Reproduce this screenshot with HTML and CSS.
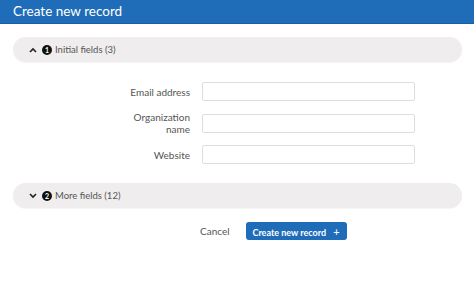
FILE: index.html
```html
<!DOCTYPE html>
<html lang="en">
<head>
  <meta charset="UTF-8">
  <title>Create new record</title>
  <link rel="stylesheet" href="styles.css">
</head>
<body>

  <div class="modal-header">Create new record</div>

  <div class="modal-body">
    <div class="section-bar">
      <svg class="chevron" width="8" height="6" viewBox="0 0 8 6"><path d="M1 5 L4 2 L7 5" fill="none" stroke="#222" stroke-width="1.6"/></svg>
      <span class="step">1</span>
      <span class="section-title">Initial fields (3)</span>
    </div>

    <div class="fields">
      <label class="field-label" for="email">Email address</label>
      <input class="field-input" id="email" type="text">

      <label class="field-label" for="org">Organization<br>name</label>
      <input class="field-input" id="org" type="text">

      <label class="field-label" for="web">Website</label>
      <input class="field-input" id="web" type="text">
    </div>

    <div class="section-bar section-bar--more">
      <svg class="chevron" width="8" height="6" viewBox="0 0 8 6"><path d="M1 1 L4 4 L7 1" fill="none" stroke="#222" stroke-width="1.6"/></svg>
      <span class="step">2</span>
      <span class="section-title">More fields (12)</span>
    </div>

    <div class="actions">
      <span></span>
      <div class="action-buttons">
        <button class="btn-cancel" type="button">Cancel</button>
        <button class="btn-primary" type="button">Create new record <span class="plus">+</span></button>
      </div>
    </div>
  </div>

</body>
</html>
```

FILE: styles.css
```css
* { box-sizing: border-box; margin: 0; padding: 0; }
body {
  width: 474px;
  height: 291px;
  background: #fff;
  font-family: Lato, "Open Sans", sans-serif;
  color: #444;
}
.modal-header {
  height: 24px;
  background: #1f6cb9;
  border-bottom: 1px solid #1a5ea3;
  color: #fff;
  font-size: 13.5px;
  line-height: 23px;
  padding-left: 13px;
}
.modal-body {
  padding: 13px 12px 0 13px;
}
.section-bar {
  display: flex;
  align-items: center;
  height: 25px;
  background: #efeded;
  border-radius: 13px;
  padding-left: 16px;
  box-shadow: 0 1px 1px rgba(0, 0, 0, 0.04);
}
.chevron {
  margin-right: 5px;
}
.step {
  display: flex;
  align-items: center;
  justify-content: center;
  width: 10px;
  height: 10px;
  border-radius: 50%;
  background: #111;
  color: #fff;
  font-size: 7px;
  font-weight: bold;
  margin-right: 3px;
}
.section-title {
  font-size: 9.5px;
  color: #555;
}
.fields {
  display: grid;
  grid-template-columns: 177px 213px;
  column-gap: 12px;
  row-gap: 10px;
  align-items: center;
  margin: 20px 0 19px;
}
.field-label {
  text-align: right;
  font-size: 10px;
  line-height: 12px;
  color: #555;
}
.field-input {
  height: 19px;
  border: 1px solid #dedede;
  border-radius: 2px;
  background: #fff;
}
.actions {
  display: grid;
  grid-template-columns: 177px auto;
  column-gap: 10px;
  margin-top: 14px;
}
.action-buttons {
  display: flex;
  align-items: center;
  gap: 16px;
}
.btn-cancel {
  border: none;
  background: none;
  font-family: inherit;
  font-size: 10px;
  color: #555;
}
.btn-primary {
  width: 101px;
  height: 18px;
  border: none;
  border-radius: 3px;
  background: #1f6cb9;
  color: #fff;
  font-family: inherit;
  font-size: 9px;
  font-weight: bold;
}
.plus {
  font-weight: normal;
  font-size: 11px;
  margin-left: 5px;
}
```
